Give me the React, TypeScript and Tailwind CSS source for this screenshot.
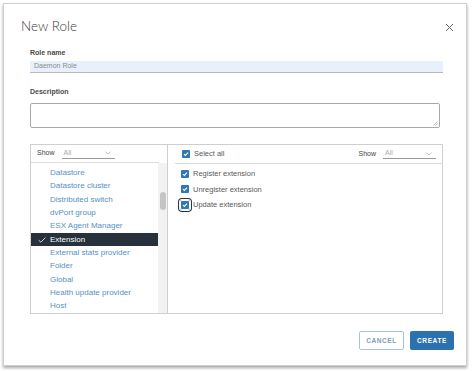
import React from "react";

const items = [
  "Datastore",
  "Datastore cluster",
  "Distributed switch",
  "dvPort group",
  "ESX Agent Manager",
  "Extension",
  "External stats provider",
  "Folder",
  "Global",
  "Health update provider",
  "Host",
];

const privs = ["Register extension", "Unregister extension", "Update extension"];

function Check({ focus }: { focus?: boolean }) {
  return (
    <div
      className={
        "flex items-center justify-center w-[10px] h-[10px] rounded-[2px] " +
        (focus ? "ring-1 ring-[#2a3440] ring-offset-1" : "")
      }
    >
      <div className="flex items-center justify-center w-[8px] h-[8px] rounded-[1px] bg-[#2f78b6]">
        <svg width="6" height="6" viewBox="0 0 6 6">
          <path d="M1 3.1 L2.4 4.4 L5 1.6" stroke="white" strokeWidth="1.1" fill="none" />
        </svg>
      </div>
    </div>
  );
}

function ShowSelect() {
  return (
    <div className="flex items-center gap-[7px]">
      <span className="text-[7px] text-[#444]">Show</span>
      <div className="flex items-center justify-between w-[53px] h-[10px] border-b border-[#9a9a9a] pl-[2px] pr-[4px]">
        <span className="text-[7px] text-[#aaa]">All</span>
        <svg width="6" height="4" viewBox="0 0 6 4">
          <path d="M0.5 0.8 L3 3 L5.5 0.8" stroke="#b0b0b0" strokeWidth="0.8" fill="none" />
        </svg>
      </div>
    </div>
  );
}

export default function App() {
  return (
    <div
      className="w-[474px] h-[371px] bg-white overflow-hidden"
      style={{ fontFamily: '"Liberation Sans", Arial, sans-serif' }}
    >
      <div className="ml-[3px] mt-[3px] w-[464px] h-[363px] border border-[#cfcfcf] bg-white shadow-[0_2px_3px_rgba(0,0,0,0.35)] flex flex-col">
        <div className="h-[44px] flex items-center justify-between pl-[17px] pr-[12px]">
          <span className="text-[13.5px] font-light text-[#3a3a3a]" style={{ fontFamily: 'Lato, sans-serif' }}>
            New Role
          </span>
          <svg width="9" height="9" viewBox="0 0 9 9" className="mt-[2px]">
            <path d="M1 1 L8 8 M8 1 L1 8" stroke="#666" strokeWidth="1" />
          </svg>
        </div>
        <div className="pl-[26px] pr-[23px] flex flex-col">
          <div className="h-[10px] flex items-center text-[7px] font-bold text-[#4a4a4a]">Role name</div>
          <div className="mt-[3px] h-[12px] bg-[#e8f0fc] border-b border-[#b9b9b9] flex items-center pl-[4px] text-[7px] text-[#8c8c8c]">
            Daemon Role
          </div>
          <div className="mt-[14px] h-[10px] flex items-center text-[7px] font-bold text-[#4a4a4a]">Description</div>
          <div className="mt-[6px] mr-[3px] h-[25px] border border-[#a8a8a8] rounded-[2px] relative">
            <svg width="5" height="5" viewBox="0 0 5 5" className="absolute right-[1px] bottom-[1px]">
              <path d="M4.5 0.5 L0.5 4.5 M4.5 2.5 L2.5 4.5" stroke="#999" strokeWidth="0.7" />
            </svg>
          </div>
          <div className="mt-[16px] h-[170px] border border-[#cfcfcf] flex">
            <div className="w-[137px] border-r border-[#cfcfcf] flex flex-col">
              <div className="h-[19px] flex items-center pl-[6px] border-b border-[#dcdcdc] mr-[8px]">
                <ShowSelect />
              </div>
              <div className="flex-1 flex">
                <div className="flex-1 pt-[3px]">
                  {items.map((it) => {
                    const sel = it === "Extension";
                    return (
                      <div
                        key={it}
                        className={
                          "h-[13.35px] flex items-center text-[8px] " +
                          (sel ? "bg-[#27313b] text-white" : "text-[#5890c4]")
                        }
                      >
                        <div className="w-[19px] flex justify-center">
                          {sel && (
                            <svg width="8" height="6" viewBox="0 0 8 6" className="ml-[3px]">
                              <path d="M0.6 3.2 L2.8 5.2 L7.4 0.6" stroke="white" strokeWidth="0.8" fill="none" />
                            </svg>
                          )}
                        </div>
                        <span>{it}</span>
                      </div>
                    );
                  })}
                </div>
                <div className="w-[9px] bg-[#f2f2f2] pt-[29px] flex justify-center">
                  <div className="w-[6px] h-[18px] rounded-[3px] bg-[#c5c5c5]" />
                </div>
              </div>
            </div>
            <div className="flex-1 flex flex-col">
              <div className="h-[19px] ml-[7px] flex items-center justify-between border-b border-[#dcdcdc] pl-[6px] pr-[6px]">
                <div className="flex items-center gap-[3px]">
                  <Check />
                  <span className="text-[7.5px] text-[#5a5a5a]">Select all</span>
                </div>
                <ShowSelect />
              </div>
              <div className="pl-[12px] pt-[2px] flex flex-col">
                {privs.map((p, i) => (
                  <div key={p} className="h-[15.5px] flex items-center gap-[3px]">
                    <Check focus={i === 2} />
                    <span className="text-[7.5px] text-[#5a5a5a]">{p}</span>
                  </div>
                ))}
              </div>
            </div>
          </div>
          <div className="mt-[17px] flex justify-end gap-[6px] mr-[-11px]">
            <div className="w-[45px] h-[19px] border border-[#a9c2d8] rounded-[2px] flex items-center justify-center text-[6.5px] font-bold tracking-[0.6px] text-[#7d9cb5]">
              CANCEL
            </div>
            <div className="w-[44px] h-[19px] bg-[#2c72b1] rounded-[2px] flex items-center justify-center text-[6.5px] font-bold tracking-[0.6px] text-white">
              CREATE
            </div>
          </div>
        </div>
      </div>
    </div>
  );
}
